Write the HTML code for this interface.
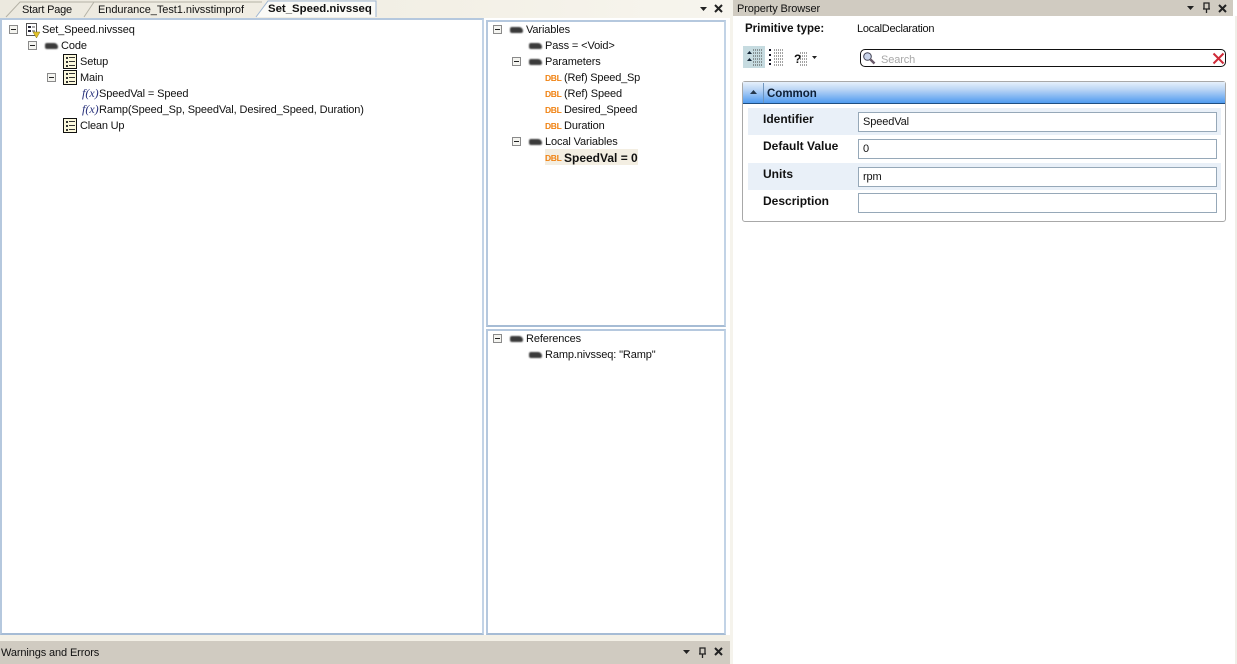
<!DOCTYPE html>
<html><head><meta charset="utf-8"><style>
html,body{margin:0;padding:0;width:1237px;height:664px;overflow:hidden;background:#fff;font-family:"Liberation Sans",sans-serif;font-size:11px;letter-spacing:-.12px;color:#111}
div,span{position:absolute;white-space:nowrap;box-sizing:border-box}
svg{position:absolute;overflow:visible}
.t{line-height:14px;height:14px;margin-top:1px}
.b{font-weight:bold;font-size:12px;letter-spacing:0}
.panel{background:#fff;border:2px solid #b9cbe0;border-color:#b5c8de #c2d3e6 #a6bcd5 #b5c8de}
.exp{width:9px;height:9px;border:1px solid #8a8a8a;background:#f4f4f0}
.exp:after{content:"";position:absolute;left:1px;top:3px;width:5px;height:1px;background:#222}
.blk{width:13px;height:6px;background:#3a3a3a;border-radius:2px 4px 2px 2px;filter:blur(.8px)}
.seq{width:14px;height:15px;border:1px solid #111;background:#fbf8dc}
.seq:before{content:"";position:absolute;left:5px;top:2px;width:6px;height:9px;background:repeating-linear-gradient(#333 0 1px,transparent 1px 4px)}
.seq:after{content:"";position:absolute;left:2px;top:2px;width:2px;height:10px;background:repeating-linear-gradient(#333 0 2px,transparent 2px 4px)}
.fx{font-family:"Liberation Serif",serif;font-style:italic;font-size:12px;color:#27307a;line-height:14px;letter-spacing:0}
.dbl{font-size:8.500px;font-weight:bold;color:#f08212;line-height:14px;letter-spacing:-.35px}
.hdr{background:#d0cbc1}
.row{left:748px;width:473px;height:27px;background:#e9f0f8}
.inp{left:858px;width:359px;height:20px;border:1px solid #96a8b8;background:#fff;padding-left:4px;line-height:19px;font-size:11px;letter-spacing:-.12px}
</style></head><body>
<!-- tab strip -->
<div style="left:0;top:0;width:732px;height:18px;background:linear-gradient(90deg,#ece9df,#f3f0e6 60%,#f7f5ee)"></div>
<svg style="left:0;top:0" width="380" height="18">
<path d="M6 17 L20 2 H84 L94 2" fill="none" stroke="#b5b2a6"/>
<path d="M84 17 L94 2 H250 L262 2" fill="none" stroke="#b5b2a6"/>
<path d="M256 17 L268 1 H376 V17" fill="#fafaf6" stroke="#9fb6d2"/>
</svg>
<div class="t" style="left:22px;top:2px;letter-spacing:-.2px">Start Page</div>
<div class="t" style="left:98px;top:2px;letter-spacing:-.05px">Endurance_Test1.nivsstimprof</div>
<div class="t b" style="left:268px;top:1px;font-size:11.400px">Set_Speed.nivsseq</div>
<svg style="left:698px;top:4px" width="28" height="10"><path d="M2 3h7l-3.500 4z" fill="#222"/><path d="M17 1l7 7M24 1l-7 7" stroke="#222" stroke-width="2"/></svg>

<!-- left tree panel -->
<div class="panel" style="left:0;top:18px;width:484px;height:617px"></div>
<div class="exp" style="left:9px;top:25px"></div>
<svg style="left:26px;top:23px" width="15" height="15"><rect x=".5" y=".5" width="10" height="12" fill="#fff" stroke="#555"/><rect x="2" y="3" width="3" height="2" fill="#223"/><rect x="2" y="7" width="3" height="2" fill="#223"/><path d="M6 4h3M6 8h3" stroke="#555"/><path d="M7 9h7l-3.500 6z" fill="#e2c22a" stroke="#8b7a1a" stroke-width=".5"/></svg>
<div class="t" style="left:42px;top:22px">Set_Speed.nivsseq</div>
<div class="exp" style="left:28px;top:41px"></div><div class="blk" style="left:45px;top:43px"></div>
<div class="t" style="left:61px;top:38px">Code</div>
<div class="seq" style="left:63px;top:54px"></div><div class="t" style="left:80px;top:54px">Setup</div>
<div class="exp" style="left:47px;top:73px"></div><div class="seq" style="left:63px;top:70px"></div><div class="t" style="left:80px;top:70px">Main</div>
<div class="fx" style="left:82px;top:86px">f(x)</div><div class="t" style="left:99px;top:86px">SpeedVal = Speed</div>
<div class="fx" style="left:82px;top:102px">f(x)</div><div class="t" style="left:99px;top:102px">Ramp(Speed_Sp, SpeedVal, Desired_Speed, Duration)</div>
<div class="seq" style="left:63px;top:118px"></div><div class="t" style="left:80px;top:118px;letter-spacing:-.2px">Clean Up</div>

<!-- variables panel -->
<div class="panel" style="left:486px;top:20px;width:240px;height:307px"></div>
<div class="exp" style="left:493px;top:25px"></div><div class="blk" style="left:510px;top:27px"></div>
<div class="t" style="left:526px;top:22px">Variables</div>
<div class="blk" style="left:529px;top:43px"></div><div class="t" style="left:545px;top:38px">Pass = &lt;Void&gt;</div>
<div class="exp" style="left:512px;top:57px"></div><div class="blk" style="left:529px;top:59px"></div>
<div class="t" style="left:545px;top:54px">Parameters</div>
<div class="dbl" style="left:545px;top:71px">DBL</div><div class="t" style="left:564px;top:70px;letter-spacing:-.2px">(Ref) Speed_Sp</div>
<div class="dbl" style="left:545px;top:87px">DBL</div><div class="t" style="left:564px;top:86px">(Ref) Speed</div>
<div class="dbl" style="left:545px;top:103px">DBL</div><div class="t" style="left:564px;top:102px;letter-spacing:-.2px">Desired_Speed</div>
<div class="dbl" style="left:545px;top:119px">DBL</div><div class="t" style="left:564px;top:118px">Duration</div>
<div class="exp" style="left:512px;top:137px"></div><div class="blk" style="left:529px;top:139px"></div>
<div class="t" style="left:545px;top:134px">Local Variables</div>
<div style="left:545px;top:149px;width:93px;height:16px;background:#f3eee2"></div>
<div class="dbl" style="left:545px;top:151px">DBL</div><div class="t b" style="left:564px;top:150px">SpeedVal = 0</div>

<!-- references panel -->
<div class="panel" style="left:486px;top:329px;width:240px;height:306px"></div>
<div class="exp" style="left:493px;top:334px"></div><div class="blk" style="left:510px;top:336px"></div>
<div class="t" style="left:526px;top:331px">References</div>
<div class="blk" style="left:529px;top:352px"></div><div class="t" style="left:545px;top:347px">Ramp.nivsseq: "Ramp"</div>

<!-- bottom -->
<div style="left:0;top:635px;width:732px;height:6px;background:#f3f0e6"></div>
<div class="hdr" style="left:0;top:641px;width:730px;height:23px"></div>
<div class="t" style="left:1px;top:645px">Warnings and Errors</div>
<svg style="left:682px;top:647px" width="44" height="12"><path d="M1 3h7l-3.500 4z" fill="#222"/><path d="M18 1h5v6h-5zM20.500 7v4M17 7h7" fill="none" stroke="#222" stroke-width="1.300"/><path d="M33 1l7 7M40 1l-7 7" stroke="#222" stroke-width="2"/></svg>
<div style="left:730px;top:0;width:3px;height:664px;background:#f5f3ec"></div>

<!-- property browser -->
<div class="hdr" style="left:733px;top:0;width:500px;height:16px"></div>
<div class="t" style="left:737px;top:1px">Property Browser</div>
<svg style="left:1186px;top:2px" width="44" height="12"><path d="M1 4h7l-3.500 4z" fill="#222"/><path d="M18 1h5v6h-5zM20.500 7v4M17 7h7" fill="none" stroke="#222" stroke-width="1.300"/><path d="M33 3l7 7M40 3l-7 7" stroke="#222" stroke-width="2"/></svg>
<div style="left:1235px;top:16px;width:2px;height:648px;background:#f0eee8"></div>
<div class="t b" style="left:745px;top:21px;font-size:11.500px">Primitive type:</div>
<div class="t" style="left:857px;top:21px;letter-spacing:-.3px">LocalDeclaration</div>

<div style="left:743px;top:46px;width:22px;height:22px;background:#c6dbe0"></div>
<svg style="left:743px;top:46px" width="80" height="22">
<path d="M4 8l2.500-3 2.500 3zM4 15l2.500-3 2.500 3z" fill="#123"/>
<path d="M10 4h9M10 7h9M10 10h9M10 13h9M10 16h9M10 19h9" stroke="#444" stroke-dasharray="1 1"/>
<path d="M27 3v2M27 8v2M27 13v2M27 17v2" stroke="#112" stroke-width="2"/>
<path d="M31 4h10M31 7h10M31 10h10M31 13h10M31 16h10M31 19h10" stroke="#444" stroke-dasharray="1 1"/>
<path d="M57 7h8M57 10h8M57 13h8M57 16h8M57 19h8" stroke="#444" stroke-dasharray="1 1"/>
<path d="M69 10h5l-2.500 3z" fill="#222"/>
</svg>
<div class="t b" style="left:794px;top:51px">?</div>

<div style="left:860px;top:49px;width:366px;height:18px;border:1px solid #111;border-radius:5px;background:#fff"></div>
<svg style="left:862px;top:51px" width="15" height="14"><circle cx="5.500" cy="5.500" r="3.800" fill="#c9d4ea" stroke="#445"/><path d="M8.500 8.500l4 4" stroke="#6a5a6a" stroke-width="2.500"/></svg>
<div class="t" style="left:881px;top:52px;color:#a8a8a8">Search</div>
<svg style="left:1212px;top:52px" width="13" height="13"><path d="M1.500 1.500l10 10M11.500 1.500l-10 10" stroke="#cf2a38" stroke-width="2"/></svg>

<div style="left:742px;top:81px;width:484px;height:141px;border:1px solid #a8a8a8;border-radius:3px;background:#fff"></div>
<div style="left:743px;top:82px;width:482px;height:22px;background:linear-gradient(#e6f0fb,#bcd6f5 35%,#4f9bf0);border-bottom:1px solid #1f4e80"></div>
<div style="left:763px;top:83px;width:1px;height:20px;background:#6f95bd"></div>
<svg style="left:750px;top:90px" width="8" height="5"><path d="M0 4l3.500-4 3.500 4z" fill="#25384c"/></svg>
<div class="t b" style="left:767px;top:86px;color:#0d1f36;font-size:11.500px">Common</div>

<div class="row" style="top:108px"></div>
<div class="row" style="top:163px"></div>
<div class="t b" style="left:763px;top:111px">Identifier</div>
<div class="inp" style="top:112px">SpeedVal</div>
<div class="t b" style="left:763px;top:138px">Default Value</div>
<div class="inp" style="top:139px">0</div>
<div class="t b" style="left:763px;top:166px">Units</div>
<div class="inp" style="top:167px">rpm</div>
<div class="t b" style="left:763px;top:193px">Description</div>
<div class="inp" style="top:193px"></div>
</body></html>
